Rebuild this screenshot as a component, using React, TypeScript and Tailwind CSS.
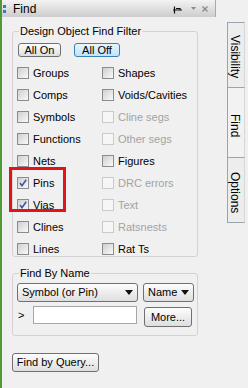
import React from "react";
import clsx from "clsx";

type Item = { label: string; checked?: boolean; disabled?: boolean };

const rows: [Item, Item][] = [
    [{ label: "Groups" }, { label: "Shapes" }],
    [{ label: "Comps" }, { label: "Voids/Cavities" }],
    [{ label: "Symbols" }, { label: "Cline segs", disabled: true }],
    [{ label: "Functions" }, { label: "Other segs", disabled: true }],
    [{ label: "Nets" }, { label: "Figures" }],
    [{ label: "Pins", checked: true }, { label: "DRC errors", disabled: true }],
    [{ label: "Vias", checked: true }, { label: "Text", disabled: true }],
    [{ label: "Clines" }, { label: "Ratsnests", disabled: true }],
    [{ label: "Lines" }, { label: "Rat Ts" }],
];

const CheckBox = ({ item }: { item: Item }) => (
    <label className="flex items-center h-[12px] gap-[4px]">
        <span
            className={clsx(
                "w-[12px] h-[12px] border flex items-center justify-center shrink-0",
                item.disabled
                    ? "border-[#cacaca] bg-[#f6f6f6]"
                    : "border-[#8c8c8c] bg-linear-to-br from-[#cfcfcf] to-[#fafafa]"
            )}
        >
            {item.checked && (
                <svg width="10" height="10" viewBox="0 0 10 10">
                    <path d="M2 5 L4 7.8 L8.2 1.8" fill="none" stroke="#3d52a6" strokeWidth="1.5" />
                </svg>
            )}
        </span>
        <span className={clsx("leading-[12px] whitespace-nowrap", item.disabled ? "text-[#a3a3a3]" : "text-black")}>
            {item.label}
        </span>
    </label>
);

const Arrow = () => (
    <svg width="8" height="5" viewBox="0 0 8 5" className="shrink-0">
        <path d="M0 0 H8 L4 5 Z" fill="#111" />
    </svg>
);

const btn =
    "border border-[#707070] rounded-[3px] bg-linear-to-b from-[#fdfdfd] to-[#dedede] flex items-center justify-center leading-none";

const App = () => {
    return (
        <div className="w-[248px] h-[388px] bg-[#f0f0f0] flex relative overflow-hidden font-['Liberation_Sans',Arial,sans-serif] text-[11px] text-black">
            <div className="w-[2px] bg-[#4e9a34] shrink-0" />

            <div className="w-[214px] shrink-0 flex flex-col">
                {/* title bar */}
                <div className="h-[17px] flex items-center bg-linear-to-b from-[#f3f3f3] to-[#cdcdcd] border-r border-[#a9a9a9]">
                    <div className="flex flex-col gap-[2px] ml-[1px]">
                        <span className="w-[3px] h-[3px] bg-[#3d78c8]" />
                        <span className="w-[3px] h-[3px] bg-[#3d78c8]" />
                    </div>
                    <span className="ml-[7px] text-[12px] leading-none">Find</span>
                    <div className="ml-auto flex items-center pr-[7px]">
                        <svg width="9" height="8" viewBox="0 0 9 8" className="mt-[3px]">
                            <path d="M1.5 0.5 V7.5 M0 4 H9 M3 2.5 H7 V4" fill="none" stroke="#111" strokeWidth="1.2" />
                        </svg>
                        <svg width="5" height="3" viewBox="0 0 5 3" className="ml-[9px]">
                            <path d="M0 0 H5 L2.5 3 Z" fill="#8a8a8a" />
                        </svg>
                        <svg width="6" height="6" viewBox="0 0 6 6" className="ml-[6px]">
                            <path d="M0.5 0.5 L5.5 5.5 M5.5 0.5 L0.5 5.5" stroke="#8a8a8a" strokeWidth="1.3" />
                        </svg>
                    </div>
                </div>

                {/* Design Object Find Filter */}
                <fieldset className="ml-[10px] w-[186px] mt-[8px] border border-[#d3d3d3] rounded-[3px] pl-[4px] pb-[1px]">
                    <legend className="ml-[2px] px-[1px] leading-[13px]">Design Object Find Filter</legend>
                    <div className="flex gap-[13px] mt-[5px] ml-[1px]">
                        <button className={clsx(btn, "w-[43px] h-[14px]")}>All On</button>
                        <button className="w-[46px] h-[14px] border border-[#3c7fb1] rounded-[3px] bg-linear-to-b from-[#e8f6fd] to-[#bfe3f6] flex items-center justify-center leading-none">
                            All Off
                        </button>
                    </div>
                    <div className="grid grid-cols-[85px_1fr] gap-y-[10px] mt-[10px]">
                        {rows.map(([a, b]) => (
                            <React.Fragment key={a.label}>
                                <CheckBox item={a} />
                                <CheckBox item={b} />
                            </React.Fragment>
                        ))}
                    </div>
                </fieldset>

                {/* Find By Name */}
                <fieldset className="ml-[10px] w-[186px] mt-[10px] border border-[#d3d3d3] rounded-[3px] pl-[4px] pb-[8px]">
                    <legend className="ml-[2px] px-[1px] leading-[13px]">Find By Name</legend>
                    <div className="flex gap-[5px] mt-[3px]">
                        <div className={clsx(btn, "w-[121px] h-[19px] !justify-between px-[4px]")}>
                            <span>Symbol (or Pin)</span>
                            <Arrow />
                        </div>
                        <div className={clsx(btn, "w-[51px] h-[19px] !justify-between px-[4px]")}>
                            <span>Name</span>
                            <Arrow />
                        </div>
                    </div>
                    <div className="flex items-start mt-[4px]">
                        <span className="w-[16px] pl-[1px] pt-[4px] leading-none">&gt;</span>
                        <input className="w-[104px] h-[18px] border border-[#a7a7a7] bg-white outline-none" />
                        <button className={clsx(btn, "ml-[7px] w-[48px] h-[20px] mt-[1px]")}>More...</button>
                    </div>
                </fieldset>

                <button className={clsx(btn, "ml-[10px] mt-[17px] w-[87px] h-[19px]")}>Find by Query...</button>
            </div>

            {/* side tabs */}
            <div className="flex-1 flex flex-col pl-[11px] pt-[22px]">
                <div className="w-[18px] h-[66px] border border-[#9aa3b1] border-r-[#d6d6d6] bg-[#ededed] pt-[3px] flex justify-center text-[12px] [writing-mode:vertical-rl]">
                    Visibility
                </div>
                <div className="w-[18px] h-[69px] border-l border-r border-[#9aa3b1] border-r-[#d6d6d6] bg-[#f2f2f2] pt-[6px] flex justify-center text-[12px] [writing-mode:vertical-rl]">
                    Find
                </div>
                <div className="w-[18px] h-[66px] border border-[#9aa3b1] border-r-[#d6d6d6] bg-[#ededed] pt-[5px] flex justify-center text-[12px] [writing-mode:vertical-rl]">
                    Options
                </div>
            </div>

            {/* annotation */}
            <div className="absolute left-[9px] top-[167px] w-[57px] h-[45px] border-[3px] border-[#e1141c] pointer-events-none" />
        </div>
    );
};

export default App;
